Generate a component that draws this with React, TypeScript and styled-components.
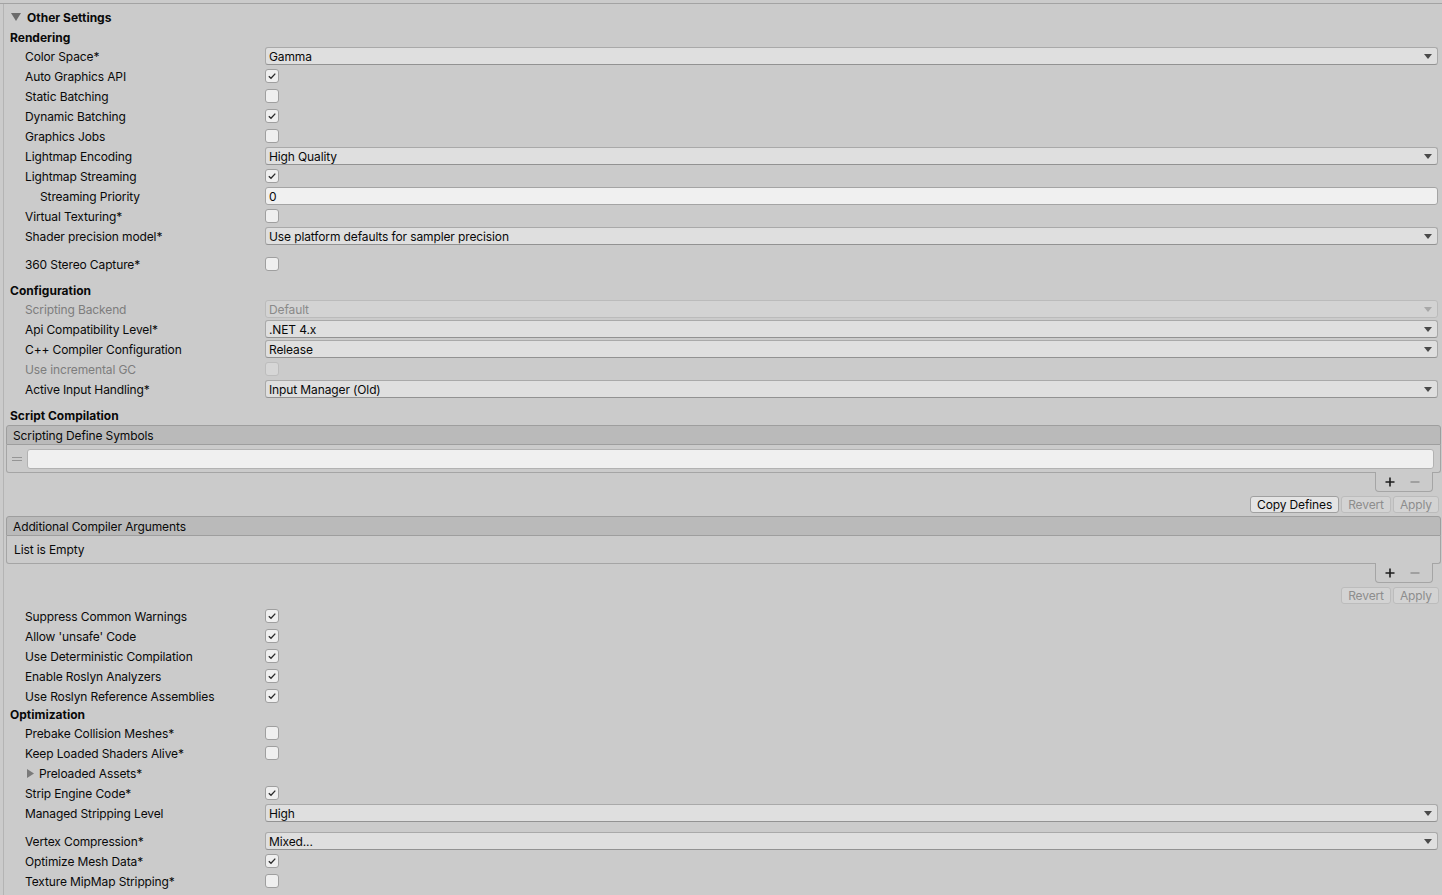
import React from 'react'
import styled, { createGlobalStyle, css } from 'styled-components'

const GlobalStyle = createGlobalStyle`
  html, body {
    margin: 0;
    padding: 0;
    background: #cbcbcb;
  }
  body {
    font-family: Inter, "Noto Sans", "Liberation Sans", sans-serif;
    font-size: 12px;
    letter-spacing: -0.12px;
    color: #090909;
    overflow: hidden;
  }
  * { box-sizing: border-box; }
`

const Page = styled.div`
  width: 1442px;
  height: 895px;
  padding-top: 3px;
`

const Panel = styled.div`
  border-top: 1px solid #a3a3a3;
  height: 100%;
  padding-left: 3px;
`

const Inner = styled.div`
  border-left: 1px solid #b4b4b4;
  height: 100%;
  padding-top: 3px;
`

const Foldout = styled.div`
  display: flex;
  align-items: center;
  height: 20px;
  padding-left: 7px;
  gap: 6px;
  font-weight: 700;
  letter-spacing: 0;
`

const SectionHeader = styled.div<{ $top?: number }>`
  height: 18px;
  display: flex;
  align-items: center;
  padding-left: 6px;
  margin-top: ${p => p.$top ?? 0}px;
  font-weight: 700;
  letter-spacing: 0;
`

const Row = styled.div<{ $gap?: boolean }>`
  display: grid;
  grid-template-columns: 261px 1fr;
  align-items: center;
  height: 20px;
  padding-right: 4px;
  margin-bottom: ${p => (p.$gap ? 8 : 0)}px;
`

const Label = styled.div<{ $indent?: number; $disabled?: boolean }>`
  display: flex;
  align-items: center;
  gap: 4px;
  padding-left: ${p => p.$indent ?? 21}px;
  color: ${p => (p.$disabled ? '#7d7d7d' : '#090909')};
  white-space: nowrap;
`

const Dropdown = styled.div<{ $disabled?: boolean }>`
  height: 18px;
  display: flex;
  align-items: center;
  justify-content: space-between;
  padding: 0 5px 0 3px;
  border: 1px solid #a9a9a9;
  border-bottom-color: #929292;
  border-radius: 3px;
  background: #dfdfdf;
  color: #090909;
  ${p =>
    p.$disabled &&
    css`
      background: #d3d3d3;
      border-color: #bbbbbb;
      color: #8a8a8a;
    `}
`

const Arrow = styled.span<{ $disabled?: boolean }>`
  width: 0;
  height: 0;
  border-left: 4.5px solid transparent;
  border-right: 4.5px solid transparent;
  border-top: 5px solid ${p => (p.$disabled ? '#a8a8a8' : '#4a4a4a')};
  margin-top: 1px;
`

const TextInput = styled.div`
  height: 18px;
  display: flex;
  align-items: center;
  padding-left: 3px;
  border: 1px solid #a4a4a4;
  border-radius: 3px;
  background: #f0f0f0;
`

const Box = styled.div<{ $disabled?: boolean }>`
  width: 14px;
  height: 14px;
  border: 1px solid #9f9f9f;
  border-radius: 3px;
  background: #efefef;
  display: flex;
  align-items: center;
  justify-content: center;
  ${p =>
    p.$disabled &&
    css`
      background: #d6d6d6;
      border-color: #bdbdbd;
    `}
`

const FoldIcon = styled.svg`
  flex: none;
`

const ListBox = styled.div<{ $top?: number }>`
  margin: ${p => p.$top ?? 0}px 1px 0 2px;
`

const ListHeader = styled.div`
  height: 20px;
  display: flex;
  align-items: center;
  padding-left: 6px;
  background: #bababa;
  border: 1px solid #9e9e9e;
  border-radius: 3px 3px 0 0;
`

const ListBody = styled.div`
  height: 28px;
  display: flex;
  align-items: center;
  gap: 5px;
  padding: 0 6px 0 4px;
  border: 1px solid #a5a5a5;
  border-top: none;
  border-radius: 0 0 3px 3px;
`

const Handle = styled.div`
  width: 10px;
  height: 4px;
  border-top: 1px solid #959595;
  border-bottom: 1px solid #959595;
  margin-left: 1px;
`

const ListField = styled.div`
  flex: 1;
  height: 20px;
  border: 1px solid #b2b2b2;
  border-radius: 3px;
  background: #f0f0f0;
`

const Empty = styled.div`
  padding-left: 3px;
`

const FooterWrap = styled.div`
  display: flex;
  justify-content: flex-end;
  padding-right: 9px;
`

const Footer = styled.div`
  width: 58px;
  height: 20px;
  margin-top: -1px;
  display: flex;
  align-items: center;
  gap: 15px;
  padding: 1px 0 0 9px;
  border: 1px solid #a5a5a5;
  border-top: none;
  border-radius: 0 0 4px 4px;
  background: #cbcbcb;
`

const ButtonRow = styled.div<{ $after?: number }>`
  display: flex;
  justify-content: flex-end;
  gap: 2px;
  margin: 4px 3px ${p => p.$after ?? 0}px 0;
`

const Button = styled.div<{ $disabled?: boolean }>`
  height: 17px;
  display: flex;
  align-items: center;
  padding: 0 6px;
  border: 1px solid #a0a0a0;
  border-radius: 3px;
  background: #e4e4e4;
  color: #090909;
  ${p =>
    p.$disabled &&
    css`
      background: #d3d3d3;
      border-color: #bcbcbc;
      color: #8d8d8d;
    `}
`

const Check = ({ on, disabled }: { on?: boolean; disabled?: boolean }) => (
  <Box $disabled={disabled}>
    {on && (
      <svg width="10" height="10" viewBox="0 0 10 10">
        <path d="M1.8 5.2 L4 7.3 L8.3 2.6" fill="none" stroke="#2b2b2b" strokeWidth="1.3" />
      </svg>
    )}
  </Box>
)

const Select = ({ value, disabled }: { value: string; disabled?: boolean }) => (
  <Dropdown $disabled={disabled}>
    <span>{value}</span>
    <Arrow $disabled={disabled} />
  </Dropdown>
)

type Field =
  | { kind: 'select'; value: string }
  | { kind: 'check'; on: boolean }
  | { kind: 'text'; value: string }
  | { kind: 'none' }

type Item = {
  label: string
  field: Field
  indent?: number
  disabled?: boolean
  gap?: boolean
  fold?: boolean
}

const rendering: Item[] = [
  { label: 'Color Space*', field: { kind: 'select', value: 'Gamma' } },
  { label: 'Auto Graphics API', field: { kind: 'check', on: true } },
  { label: 'Static Batching', field: { kind: 'check', on: false } },
  { label: 'Dynamic Batching', field: { kind: 'check', on: true } },
  { label: 'Graphics Jobs', field: { kind: 'check', on: false } },
  { label: 'Lightmap Encoding', field: { kind: 'select', value: 'High Quality' } },
  { label: 'Lightmap Streaming', field: { kind: 'check', on: true } },
  { label: 'Streaming Priority', field: { kind: 'text', value: '0' }, indent: 36 },
  { label: 'Virtual Texturing*', field: { kind: 'check', on: false } },
  {
    label: 'Shader precision model*',
    field: { kind: 'select', value: 'Use platform defaults for sampler precision' },
    gap: true,
  },
  { label: '360 Stereo Capture*', field: { kind: 'check', on: false } },
]

const configuration: Item[] = [
  { label: 'Scripting Backend', field: { kind: 'select', value: 'Default' }, disabled: true },
  { label: 'Api Compatibility Level*', field: { kind: 'select', value: '.NET 4.x' } },
  { label: 'C++ Compiler Configuration', field: { kind: 'select', value: 'Release' } },
  { label: 'Use incremental GC', field: { kind: 'check', on: false }, disabled: true },
  { label: 'Active Input Handling*', field: { kind: 'select', value: 'Input Manager (Old)' } },
]

const compilerFlags: Item[] = [
  { label: 'Suppress Common Warnings', field: { kind: 'check', on: true } },
  { label: "Allow 'unsafe' Code", field: { kind: 'check', on: true } },
  { label: 'Use Deterministic Compilation', field: { kind: 'check', on: true } },
  { label: 'Enable Roslyn Analyzers', field: { kind: 'check', on: true } },
  { label: 'Use Roslyn Reference Assemblies', field: { kind: 'check', on: true } },
]

const optimization: Item[] = [
  { label: 'Prebake Collision Meshes*', field: { kind: 'check', on: false } },
  { label: 'Keep Loaded Shaders Alive*', field: { kind: 'check', on: false } },
  { label: 'Preloaded Assets*', field: { kind: 'none' }, indent: 23, fold: true },
  { label: 'Strip Engine Code*', field: { kind: 'check', on: true } },
  { label: 'Managed Stripping Level', field: { kind: 'select', value: 'High' }, gap: true },
  { label: 'Vertex Compression*', field: { kind: 'select', value: 'Mixed...' } },
  { label: 'Optimize Mesh Data*', field: { kind: 'check', on: true } },
  { label: 'Texture MipMap Stripping*', field: { kind: 'check', on: false } },
]

const renderField = (f: Field, disabled?: boolean) => {
  switch (f.kind) {
    case 'select':
      return <Select value={f.value} disabled={disabled} />
    case 'check':
      return <Check on={f.on} disabled={disabled} />
    case 'text':
      return <TextInput>{f.value}</TextInput>
    default:
      return <div />
  }
}

const Rows = ({ items }: { items: Item[] }) => (
  <>
    {items.map(it => (
      <Row key={it.label} $gap={it.gap}>
        <Label $indent={it.indent} $disabled={it.disabled}>
          {it.fold && (
            <FoldIcon width="8" height="9" viewBox="0 0 8 9">
              <path d="M0 0 L7 4.5 L0 9 Z" fill="#7a7a7a" />
            </FoldIcon>
          )}
          {it.label}
        </Label>
        {renderField(it.field, it.disabled)}
      </Row>
    ))}
  </>
)

const ListFooter = () => (
  <FooterWrap>
    <Footer>
      <svg width="10" height="10" viewBox="0 0 10 10">
        <path d="M5 0.5 V9.5 M0.5 5 H9.5" stroke="#1e1e1e" strokeWidth="1.6" />
      </svg>
      <svg width="10" height="10" viewBox="0 0 10 10">
        <path d="M0.5 5 H9.5" stroke="#8e8e8e" strokeWidth="1.4" />
      </svg>
    </Footer>
  </FooterWrap>
)

export default function App() {
  return (
    <Page>
      <GlobalStyle />
      <Panel>
        <Inner>
          <Foldout>
            <FoldIcon width="10" height="8" viewBox="0 0 10 8">
              <path d="M0 0 L10 0 L5 8 Z" fill="#6b6b6b" />
            </FoldIcon>
            Other Settings
          </Foldout>

          <SectionHeader $top={1}>Rendering</SectionHeader>
          <Rows items={rendering} />

          <SectionHeader $top={7}>Configuration</SectionHeader>
          <Rows items={configuration} />

          <SectionHeader $top={7}>Script Compilation</SectionHeader>
          <ListBox $top={1}>
            <ListHeader>Scripting Define Symbols</ListHeader>
            <ListBody>
              <Handle />
              <ListField />
            </ListBody>
          </ListBox>
          <ListFooter />
          <ButtonRow>
            <Button>Copy Defines</Button>
            <Button $disabled>Revert</Button>
            <Button $disabled>Apply</Button>
          </ButtonRow>

          <ListBox $top={3}>
            <ListHeader>Additional Compiler Arguments</ListHeader>
            <ListBody>
              <Empty>List is Empty</Empty>
            </ListBody>
          </ListBox>
          <ListFooter />
          <ButtonRow $after={2}>
            <Button $disabled>Revert</Button>
            <Button $disabled>Apply</Button>
          </ButtonRow>

          <Rows items={compilerFlags} />

          <SectionHeader $top={-1}>Optimization</SectionHeader>
          <Rows items={optimization} />
        </Inner>
      </Panel>
    </Page>
  )
}
